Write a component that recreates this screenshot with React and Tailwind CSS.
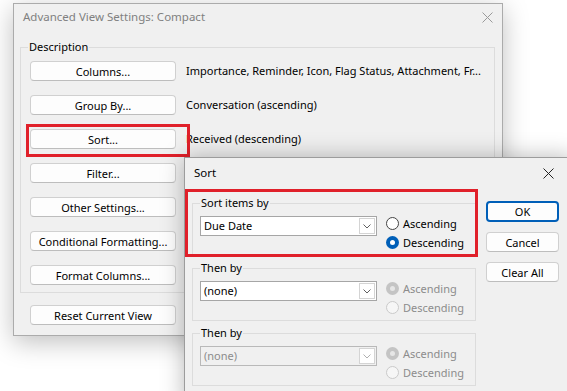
import React from "react";

// small helpers for the Win11-ish dialog controls
const Btn = ({ children, className = "" }) => (
  <button
    className={`h-[20px] rounded-[4px] border border-[#d0d0d0] border-b-[#bdbdbd] bg-[#fdfdfd] leading-none text-black ${className}`}
  >
    {children}
  </button>
);

const CloseX = ({ color }) => (
  <svg width="11" height="11" viewBox="0 0 11 11">
    <path d="M0.5 0.5L10.5 10.5M10.5 0.5L0.5 10.5" stroke={color} strokeWidth="1" />
  </svg>
);

const Chevron = ({ color = "#606060" }) => (
  <svg width="8" height="5" viewBox="0 0 8 5">
    <path d="M0.5 0.5L4 4L7.5 0.5" fill="none" stroke={color} strokeWidth="1" />
  </svg>
);

const Radio = ({ checked, disabled, label }) => {
  let circle;
  if (disabled && checked) {
    circle = (
      <span className="flex h-[13px] w-[13px] items-center justify-center rounded-full bg-[#c4c4c4]">
        <span className="h-[5px] w-[5px] rounded-full bg-[#e6e6e6]" />
      </span>
    );
  } else if (disabled) {
    circle = <span className="h-[13px] w-[13px] rounded-full border border-[#cacaca] bg-[#f6f6f6]" />;
  } else if (checked) {
    circle = (
      <span className="flex h-[13px] w-[13px] items-center justify-center rounded-full bg-[#005fb8]">
        <span className="h-[5px] w-[5px] rounded-full bg-white" />
      </span>
    );
  } else {
    circle = <span className="h-[13px] w-[13px] rounded-full border border-[#444] bg-white" />;
  }
  return (
    <div className="flex h-[19px] items-center gap-[4px]">
      {circle}
      <span className={disabled ? "text-[#8c8c8c]" : "text-black"}>{label}</span>
    </div>
  );
};

const Combo = ({ value, disabled }) => (
  <div
    className={`flex h-[20px] w-[177px] items-center justify-between pl-[3px] pr-[1px] ${
      disabled ? "border border-[#b9b9b9] bg-[#f0f0f0] text-[#8c8c8c]" : "border border-[#a6a6a6] bg-white text-black"
    }`}
  >
    <span>{value}</span>
    <span className="flex h-[16px] w-[16px] items-center justify-center border border-[#d4d4d4] bg-white">
      <Chevron color={disabled ? "#b0b0b0" : "#606060"} />
    </span>
  </div>
);

const SortGroup = ({ title, value, comboDisabled, checked, radiosDisabled }) => (
  <fieldset className="border border-[#dcdcdc]">
    <legend className="ml-[7px] h-[16px] px-[1px] leading-[16px] text-black">{title}</legend>
    <div className="flex items-start gap-[9px] pb-[3px] pl-[7px] pt-[5px]">
      <Combo value={value} disabled={comboDisabled} />
      <div className="-mt-[2px] flex flex-col">
        <Radio label="Ascending" checked={checked === "asc"} disabled={radiosDisabled} />
        <Radio label="Descending" checked={checked === "desc"} disabled={radiosDisabled} />
      </div>
    </div>
  </fieldset>
);

const rows = [
  ["Columns...", "Importance, Reminder, Icon, Flag Status, Attachment, Fr..."],
  ["Group By...", "Conversation (ascending)"],
  ["Sort...", "Received (descending)"],
  ["Filter...", ""],
  ["Other Settings...", ""],
  ["Conditional Formatting...", ""],
  ["Format Columns...", ""],
];

export default function App() {
  return (
    <div
      className="relative h-[391px] w-[567px] overflow-hidden bg-white text-[11px] leading-[16px]"
      style={{ fontFamily: "'Noto Sans', 'Open Sans', sans-serif" }}
    >
      {/* Advanced View Settings window (inactive) */}
      <div className="absolute left-[13px] top-[3px] flex h-[333px] w-[490px] flex-col border border-[#ababab] bg-[#f0f0f0] shadow-[0_6px_24px_rgba(0,0,0,0.25)]">
        <div className="flex h-[26px] shrink-0 items-center justify-between pl-[9px] pr-[9px]">
          <span className="text-[11.5px] text-[#808080]">Advanced View Settings: Compact</span>
          <CloseX color="#9a9a9a" />
        </div>

        <fieldset className="ml-[6px] mr-[7px] mt-[9px] border border-[#dcdcdc]">
          <legend className="ml-[7px] h-[16px] px-[1px] leading-[16px] text-black">Description</legend>
          <div className="flex flex-col gap-[14px] pb-[7px] pl-[9px] pr-[9px] pt-[6px]">
            {rows.map(([label, desc]) => (
              <div key={label} className="flex items-center gap-[10px]">
                <Btn className="w-[146px] shrink-0">{label}</Btn>
                <span className="whitespace-nowrap text-black">{desc}</span>
              </div>
            ))}
          </div>
        </fieldset>

        <div className="ml-[16px] mt-[12px]">
          <Btn className="w-[146px]">Reset Current View</Btn>
        </div>
      </div>

      {/* highlight around Sort... button */}
      <div className="absolute left-[26px] top-[124px] h-[33px] w-[164px] border-[3px] border-[#e0202a]" />

      {/* Sort window (active) */}
      <div className="absolute left-[184px] top-[157px] flex h-[250px] w-[390px] flex-col border border-[#9c9c9c] bg-[#f0f0f0] shadow-[0_0_22px_rgba(0,0,0,0.28)]">
        <div className="flex h-[30px] shrink-0 items-center justify-between pl-[9px] pr-[19px]">
          <span className="text-[11.5px] text-black">Sort</span>
          <CloseX color="#222" />
        </div>
        <div className="flex items-start gap-[10px] pl-[7px] pt-[7px]">
          <div className="flex w-[284px] flex-col gap-[4px]">
            <SortGroup title="Sort items by" value="Due Date" checked="desc" />
            <SortGroup title="Then by" value="(none)" checked="asc" radiosDisabled />
            <SortGroup title="Then by" value="(none)" checked="asc" comboDisabled radiosDisabled />
          </div>
          <div className="mt-[6px] flex flex-col gap-[10px]">
            <button className="h-[21px] w-[73px] rounded-[4px] border-2 border-[#005fb8] bg-[#fdfdfd] leading-none text-black">
              OK
            </button>
            <Btn className="w-[73px]">Cancel</Btn>
            <Btn className="w-[73px]">Clear All</Btn>
          </div>
        </div>
      </div>

      {/* highlight around the first sort group */}
      <div className="absolute left-[185px] top-[189px] h-[68px] w-[293px] border-[3px] border-[#e0202a]" />
    </div>
  );
}
